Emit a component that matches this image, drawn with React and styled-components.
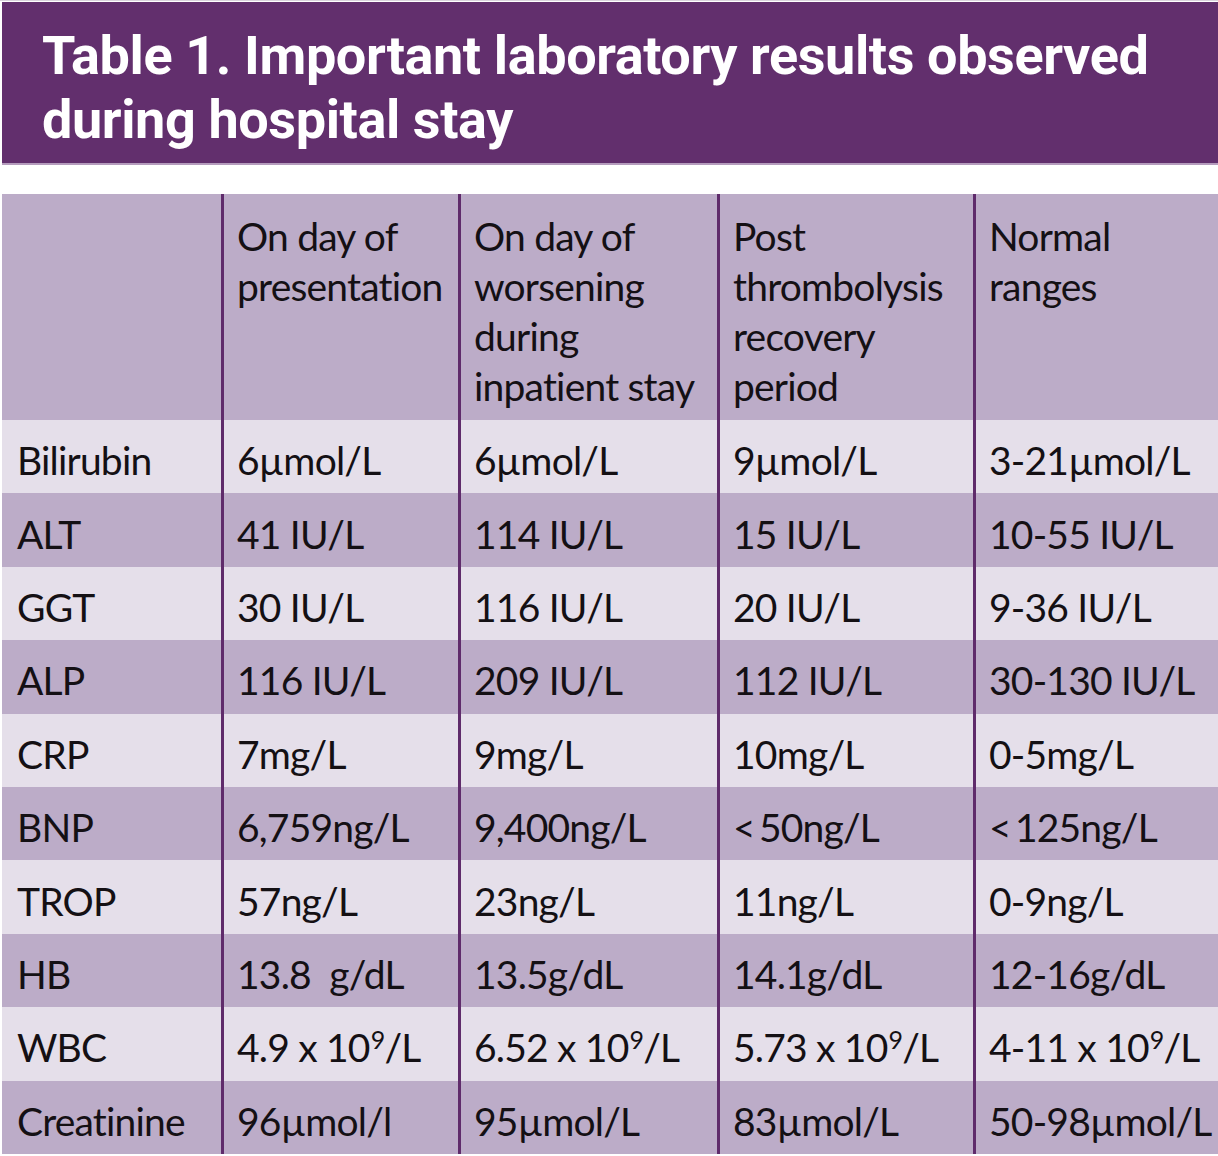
import React from "react";
import styled, { createGlobalStyle } from "styled-components";

const Global = createGlobalStyle`
  html, body {
    margin: 0;
    padding: 0;
    background: #ffffff;
  }
`;

const Page = styled.div`
  width: 1218px;
  padding: 1px 0 0 2px;
  box-sizing: border-box;
  border-top: 1px solid #d9d4dc;
`;

const TitleBar = styled.header`
  height: 163px;
  box-sizing: border-box;
  background: #622f6d;
  border-bottom: 2px solid #b59cbd;
  padding: 22px 0 0 40px;
  color: #ffffff;
  font-family: Roboto, "Liberation Sans", sans-serif;
  font-weight: 700;
  font-size: 54px;
  line-height: 64px;
  letter-spacing: -0.4px;
  white-space: nowrap;
`;

const Table = styled.div`
  margin-top: 29px;
  display: grid;
  grid-template-columns: 219px 237px 259px 256px 245px;
  grid-template-rows: 226px repeat(10, 73.4px);
  font-family: Lato, "Open Sans", sans-serif;
  font-size: 39px;
  letter-spacing: -0.8px;
  color: #141014;
`;

const Cell = styled.div`
  box-sizing: border-box;
  background: ${({ $shade }) => ($shade === "dark" ? "#bcacc8" : "#e5dfea")};
  border-left: ${({ $first }) => ($first ? "none" : "3px solid #5f2b6b")};
  padding-left: ${({ $first }) => ($first ? "15px" : "13px")};
  padding-top: 8px;
  display: flex;
  align-items: center;
  white-space: nowrap;
`;

const HeadCell = styled(Cell)`
  align-items: flex-start;
  padding-top: 17px;
  line-height: 50px;
  white-space: normal;
`;

const Value = styled.span`
  line-height: 1.2;
`;

const Sup = styled.sup`
  font-size: 0.64em;
  vertical-align: 0.55em;
  line-height: 0;
  margin-left: 1px;
`;

const headers = [
  "",
  "On day of presentation",
  "On day of worsening during inpatient stay",
  "Post thrombolysis recovery period",
  "Normal ranges",
];

const sci = (a) => (
  <>
    {a} x 10<Sup>9</Sup>/L
  </>
);

const rows = [
  ["Bilirubin", "6µmol/L", "6µmol/L", "9µmol/L", "3-21µmol/L"],
  ["ALT", "41 IU/L", "114 IU/L", "15 IU/L", "10-55 IU/L"],
  ["GGT", "30 IU/L", "116 IU/L", "20 IU/L", "9-36 IU/L"],
  ["ALP", "116 IU/L", "209 IU/L", "112 IU/L", "30-130 IU/L"],
  ["CRP", "7mg/L", "9mg/L", "10mg/L", "0-5mg/L"],
  ["BNP", "6,759ng/L", "9,400ng/L", "<\u200950ng/L", "<\u2009125ng/L"],
  ["TROP", "57ng/L", "23ng/L", "11ng/L", "0-9ng/L"],
  ["HB", "13.8\u00a0 g/dL", "13.5g/dL", "14.1g/dL", "12-16g/dL"],
  ["WBC", sci("4.9"), sci("6.52"), sci("5.73"), sci("4-11")],
  ["Creatinine", "96µmol/l", "95µmol/L", "83µmol/L", "50-98µmol/L"],
];

export default function App() {
  return (
    <Page>
      <Global />
      <TitleBar>
        Table 1. Important laboratory results observed
        <br />
        during hospital stay
      </TitleBar>
      <Table>
        {headers.map((h, i) => (
          <HeadCell key={`h${i}`} $shade="dark" $first={i === 0}>
            {h}
          </HeadCell>
        ))}
        {rows.map((row, r) =>
          row.map((v, c) => (
            <Cell
              key={`${r}-${c}`}
              $shade={r % 2 === 0 ? "light" : "dark"}
              $first={c === 0}
            >
              <Value>{v}</Value>
            </Cell>
          ))
        )}
      </Table>
    </Page>
  );
}
